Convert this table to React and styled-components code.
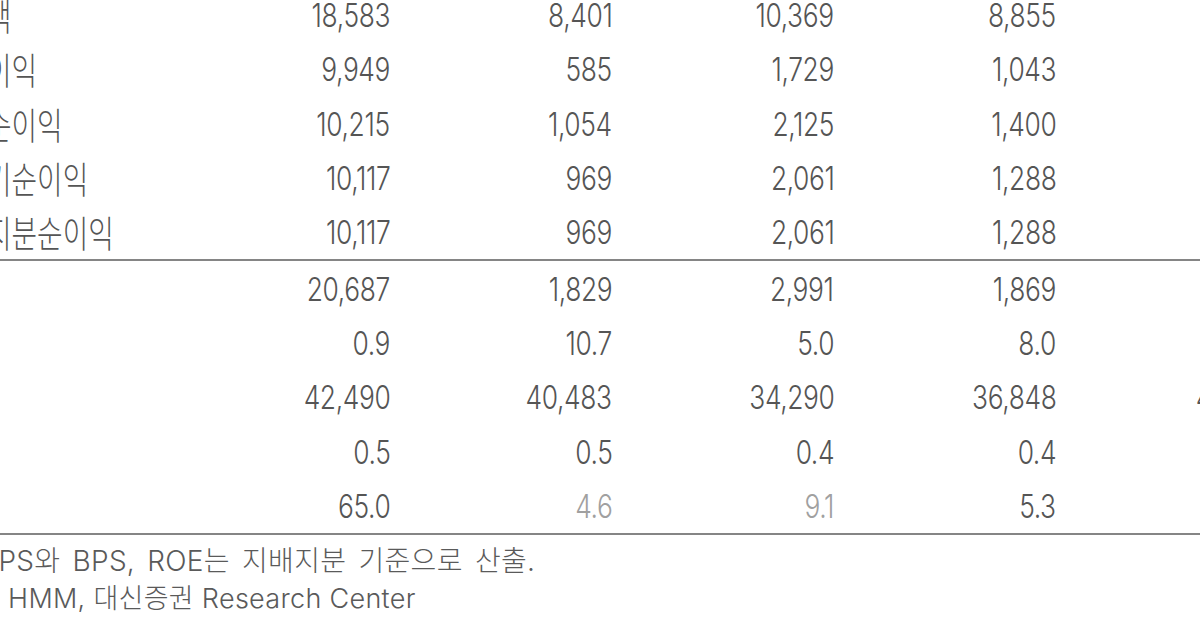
import React from "react";
import styled, { createGlobalStyle } from "styled-components";

const Global = createGlobalStyle`
  html, body {
    margin: 0;
    background: #fff;
    overflow: hidden;
  }
`;

const Page = styled.div`
  width: 1200px;
  height: 630px;
  overflow: hidden;
  background: #fff;
  color: #555;
  font-family: Inter, "Noto Sans CJK KR", sans-serif;
  font-weight: 300;
`;

const Table = styled.div`
  margin-left: -65px;
  margin-top: -12px;
  width: 1332px;
`;

const Group = styled.div`
  display: grid;
  grid-template-columns: 233px repeat(4, 222px) 211px;
  grid-auto-rows: 54.3px;
  align-items: center;
  border-bottom: 2px solid #858585;
`;

const Label = styled.span`
  justify-self: start;
  font-size: 37px;
  white-space: nowrap;
  transform: scaleX(0.75);
  transform-origin: left center;
`;

const Num = styled.span`
  justify-self: end;
  font-size: 33px;
  letter-spacing: -0.5px;
  white-space: nowrap;
  color: ${(p) => (p.faint ? "#a0a0a0" : "#555")};
  transform: scaleX(0.8);
  transform-origin: right center;
`;

const Notes = styled.div`
  margin-left: -58px;
  padding-top: 7px;
  display: flex;
  flex-direction: column;
`;

const Note = styled.div`
  height: 38px;
  line-height: 38px;
  font-size: ${(p) => (p.wide ? "28px" : "27px")};
  letter-spacing: 0.3px;
  word-spacing: ${(p) => (p.wide ? "4px" : "0")};
  text-indent: ${(p) => (p.wide ? "-7px" : "0")};
  white-space: nowrap;
  color: #5a5a5a;
`;

const income = [
  ["매출액", "18,583", "8,401", "10,369", "8,855", "9,012"],
  ["영업이익", "9,949", "585", "1,729", "1,043", "1,101"],
  ["세전순이익", "10,215", "1,054", "2,125", "1,400", "1,452"],
  ["총당기순이익", "10,117", "969", "2,061", "1,288", "1,336"],
  ["지배지분순이익", "10,117", "969", "2,061", "1,288", "1,336"],
];

const valuation = [
  ["EPS", "20,687", "1,829", "2,991", "1,869", "1,939"],
  ["PER", "0.9", "10.7", "5.0", "8.0", "7.7"],
  ["BPS", "42,490", "40,483", "34,290", "36,848", "40,115"],
  ["PBR", "0.5", "0.5", "0.4", "0.4", "0.4"],
  ["ROE", "65.0", "4.6", "9.1", "5.3", "5.1"],
];

// 워터마크에 가려 흐리게 보이는 칸
const faintCells = { "ROE-1": true, "ROE-2": true };

const Rows = ({ data }) => (
  <Group>
    {data.map(([label, ...values]) => (
      <React.Fragment key={label}>
        <Label>{label}</Label>
        {values.map((v, i) => (
          <Num key={i} faint={faintCells[`${label}-${i}`]}>
            {v}
          </Num>
        ))}
      </React.Fragment>
    ))}
  </Group>
);

export default function App() {
  return (
    <>
      <Global />
      <Page>
        <Table>
          <Rows data={income} />
          <Rows data={valuation} />
        </Table>
        <Notes>
          <Note wide>주: EPS와 BPS, ROE는 지배지분 기준으로 산출.</Note>
          <Note>자료: HMM, 대신증권 Research Center</Note>
        </Notes>
      </Page>
    </>
  );
}
